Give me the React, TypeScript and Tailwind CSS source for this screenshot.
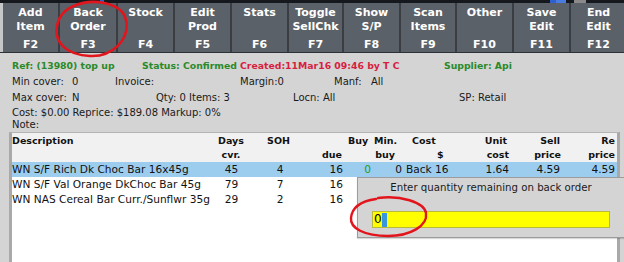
import React from "react";

const font = "font-['DejaVu_Sans',Verdana,sans-serif]";

function Btn({ a, b, k, w, first }: { a: string; b?: string; k: string; w: string; first?: boolean }) {
  return (
    <div
      className={`${w} h-full shrink-0 flex flex-col items-center pt-[3px] text-white font-bold text-[11px] leading-[14px] ${
        first ? "" : "border-l-2 border-[#3a3e43]"
      }`}
    >
      <div className="h-[14px]">{a}</div>
      <div className="h-[14px]">{b ?? ""}</div>
      <div className="h-[14px] mt-[4px]">{k}</div>
    </div>
  );
}

function Row({
  desc,
  days,
  soh,
  due,
  buy,
  minbuy,
  cost,
  unit,
  sell,
  re,
  selected,
}: {
  desc: string;
  days: string;
  soh: string;
  due: string;
  buy?: string;
  minbuy?: string;
  cost?: string;
  unit?: string;
  sell?: string;
  re?: string;
  selected?: boolean;
}) {
  return (
    <div className={`flex h-[15px] leading-[15px] text-[10.6px] text-[#111] ${selected ? "bg-[#9dcdee]" : ""}`}>
      <div className="w-[198px] shrink-0 whitespace-nowrap">{desc}</div>
      <div className="w-[45px] shrink-0 text-center pr-[2px]">{days}</div>
      <div className="w-[50px] shrink-0 text-center">{soh}</div>
      <div className="w-[40px] shrink-0 text-right pr-[2px]">{due}</div>
      <div className="w-[29px] shrink-0 text-right pr-[3px] text-[#1c9a1c]">{buy}</div>
      <div className="w-[30px] shrink-0 text-right pr-[2px]">{minbuy}</div>
      <div className="w-[48px] shrink-0 pl-[2px] whitespace-nowrap">{cost}</div>
      <div className="w-[58px] shrink-0 text-right pr-[1px]">{unit}</div>
      <div className="w-[52px] shrink-0 text-right pr-[2px]">{sell}</div>
      <div className="w-[54px] shrink-0 text-right pr-[1px]">{re}</div>
    </div>
  );
}

export default function App() {
  return (
    <div className={`relative w-[624px] h-[262px] overflow-hidden bg-[#d4d4d4] flex flex-col ${font}`}>
      {/* top strip */}
      <div className="h-[3px] shrink-0 bg-[#15181c] flex">
        <div className="w-[100px]" />
        <div className="w-[4px] bg-[#2f5fc0]" />
        <div className="w-[446px]" />
        <div className="w-[6px] bg-[#3060d0]" />
        <div className="w-[10px] bg-[#4a7be0]" />
        <div className="w-[8px]" />
        <div className="w-[12px] bg-[#8a8a8a]" />
      </div>
      {/* function key bar */}
      <div className="h-[50px] shrink-0 flex bg-[#5b6168] border-b border-[#2e3236]">
        <div className="w-[3px] shrink-0 bg-[#c4c6c8]" />
        <Btn first a="Add" b="Item" k="F2" w="w-[55px]" />
        <Btn a="Back" b="Order" k="F3" w="w-[58px]" />
        <Btn a="Stock" k="F4" w="w-[57px]" />
        <Btn a="Edit" b="Prod" k="F5" w="w-[57px]" />
        <Btn a="Stats" k="F6" w="w-[57px]" />
        <Btn a="Toggle" b="SellChk" k="F7" w="w-[55px]" />
        <Btn a="Show" b="S/P" k="F8" w="w-[57px]" />
        <Btn a="Scan" b="Items" k="F9" w="w-[56px]" />
        <Btn a="Other" k="F10" w="w-[57px]" />
        <Btn a="Save" b="Edit" k="F11" w="w-[57px]" />
        <Btn a="End" b="Edit" k="F12" w="w-[57px]" />
      </div>

      {/* info */}
      <div className="pl-[12px] pt-[5px] text-[10px] text-[#1a1a1a] shrink-0">
        <div className="flex h-[16px] leading-[16px] font-bold text-[9.3px] whitespace-nowrap">
          <span className="w-[130px] text-[#2a8a2a]">Ref: (13980) top up</span>
          <span className="w-[98px] text-[#2a8a2a]">Status: Confirmed</span>
          <span className="w-[204px] text-[#d81e3e]">Created:11Mar16 09:46 by T C</span>
          <span className="text-[#2a8a2a]">Supplier: Api</span>
        </div>
        <div className="flex h-[16px] leading-[16px] whitespace-nowrap">
          <span className="w-[60px]">Min cover:</span>
          <span className="w-[43px]">0</span>
          <span className="w-[125px]">Invoice:</span>
          <span className="w-[94px]">Margin:0</span>
          <span className="w-[37px]">Manf:</span>
          <span>All</span>
        </div>
        <div className="flex h-[16px] leading-[16px] whitespace-nowrap">
          <span className="w-[60px]">Max cover:</span>
          <span className="w-[84px]">N</span>
          <span className="w-[137px]">Qty: 0 Items: 3</span>
          <span className="w-[166px]">Locn: All</span>
          <span>SP: Retail</span>
        </div>
        <div className="mt-[1px] h-[12px] leading-[12px] whitespace-nowrap">Cost: $0.00 Reprice: $189.08 Markup: 0%</div>
        <div className="h-[12px] leading-[12px]">Note:</div>
      </div>

      {/* table */}
      <div className="mt-[1px] ml-[9px] w-[611px] flex-1 bg-white border-t border-l-[3px] border-r-[3px] border-[#a9a9a9] border-t-[#b4b4b4] overflow-hidden">
        <div className="flex h-[29px] pt-[1px] leading-[14px] text-[9.5px] font-bold text-[#111] bg-[#f1f1f1]">
          <div className="w-[198px] shrink-0">Description</div>
          <div className="w-[45px] shrink-0 text-center pr-[3px]">
            <div>Days</div>
            <div>cvr.</div>
          </div>
          <div className="w-[50px] shrink-0 text-center pr-[3px]">
            <div>SOH</div>
          </div>
          <div className="w-[40px] shrink-0 text-right pr-[3px]">
            <div>&nbsp;</div>
            <div>due</div>
          </div>
          <div className="w-[29px] shrink-0 pl-[3px]">
            <div>Buy</div>
          </div>
          <div className="w-[30px] shrink-0 text-right pr-[9px]">
            <div>Min.</div>
            <div>buy</div>
          </div>
          <div className="w-[48px] shrink-0">
            <div className="pl-[8px]">Cost</div>
            <div className="pl-[33px]">$</div>
          </div>
          <div className="w-[58px] shrink-0 text-right pr-[1px]">
            <div className="pr-[2px]">Unit</div>
            <div>cost</div>
          </div>
          <div className="w-[52px] shrink-0 text-right pr-[1px]">
            <div className="pr-[1px]">Sell</div>
            <div>price</div>
          </div>
          <div className="w-[54px] shrink-0 text-right pr-[1px]">
            <div>Re</div>
            <div>price</div>
          </div>
        </div>
        <Row
          selected
          desc="WN S/F Rich Dk Choc Bar 16x45g"
          days="45"
          soh="4"
          due="16"
          buy="0"
          minbuy="0"
          cost="Back 16"
          unit="1.64"
          sell="4.59"
          re="4.59"
        />
        <Row desc="WN S/F Val Orange DkChoc Bar 45g" days="79" soh="7" due="16" />
        <Row desc="WN NAS Cereal Bar Curr./Sunflwr 35g" days="29" soh="2" due="16" />
      </div>

      {/* back order dialog */}
      <div className="absolute left-[357px] top-[177px] w-[267px] h-[61px] bg-[#d4d4d4] border-l border-t border-b border-[#9c9c9c] shadow-[0_1px_1px_rgba(0,0,0,0.15)]">
        <div className="pt-[3px] text-center text-[10.2px] leading-[14px] text-[#1a1a1a]">
          Enter quantity remaining on back order
        </div>
        <div className="mt-[16px] ml-[14px] w-[238px] h-[17px] bg-[#ffff00] border border-[#b9b93a] flex items-center">
          <span className="text-[12px] leading-[15px] text-black pl-[1px]">0</span>
          <span className="w-[5px] h-[14px] bg-[#3a96dc]" />
        </div>
      </div>

      {/* red annotation circles */}
      <svg className="absolute left-0 top-0 pointer-events-none" width="624" height="262" viewBox="0 0 624 262">
        <path
          d="M74 6 C 92 -2, 122 2, 126 20 C 130 40, 112 57, 90 56 C 66 55, 54 42, 57 26 C 59 14, 68 6, 84 3"
          fill="none"
          stroke="#e2141c"
          strokeWidth="2.6"
          strokeLinecap="round"
        />
        <path
          d="M378 198 C 400 195, 424 202, 426 213 C 428 226, 410 236, 388 236 C 364 236, 350 228, 351 218 C 352 207, 362 201, 376 199"
          fill="none"
          stroke="#e2141c"
          strokeWidth="2.4"
          strokeLinecap="round"
        />
      </svg>
    </div>
  );
}
